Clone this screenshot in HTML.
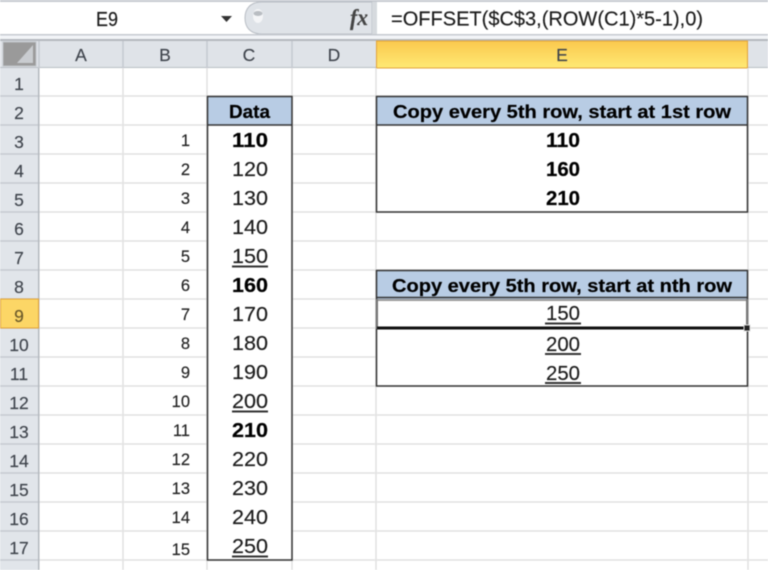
<!DOCTYPE html>
<html><head><meta charset="utf-8"><style>
html,body{margin:0;padding:0;background:#fff;width:768px;height:570px;overflow:hidden}
svg{display:block;filter:blur(0.5px)}
text{font-family:"Liberation Sans",sans-serif;fill:#1c1c1c;stroke:#1c1c1c;stroke-width:.15px}
.b{font-weight:bold;fill:#000;stroke:#000;stroke-width:.2px}
.h{fill:#3f444c;stroke:#3f444c;font-size:17.5px;text-anchor:middle}
.n{font-size:16.5px;text-anchor:end;fill:#222;stroke:#222}
.v{font-size:20.5px}
.g{stroke:#e2e2e2;stroke-width:1.5;fill:none}
.s{stroke:#c5cad0;stroke-width:1.5}
.k{fill:none;stroke:#333;stroke-width:1.5}
</style></head><body>
<svg width="768" height="570" viewBox="0 0 768 570" xmlns="http://www.w3.org/2000/svg">
<rect width="768" height="570" fill="#fff"/>
<!-- top bar -->
<rect width="768" height="41" fill="#fff"/>
<rect width="768" height="2" fill="#c6cad0"/>
<path d="M372 2V34H262C250 34 245 27 245 18C245 9 250 2 262 2Z" fill="#dfe3e8" stroke="#b8bdc4" stroke-width="1"/>
<ellipse cx="258" cy="16" rx="5" ry="7" fill="#f4f5f7"/>
<ellipse cx="258" cy="13.500" rx="4.500" ry="2.500" fill="#b9bdc2"/>
<rect x="372" y="2" width="5" height="32" fill="#d6dade"/>
<rect x="0" y="34" width="768" height="1.5" fill="#c6cad0"/>
<rect x="0" y="35.5" width="768" height="3.5" fill="#f2f4f7"/>
<rect x="0" y="39" width="768" height="2" fill="#b4b8be"/>
<text x="96" y="26" font-size="20" textLength="22" lengthAdjust="spacingAndGlyphs">E9</text>
<path d="M221 16H232L226.500 22Z" fill="#333"/>
<text x="350" y="25" style="font-family:'Liberation Serif',serif;font-style:italic;font-weight:bold;fill:#444;stroke:#444" font-size="23" textLength="18" lengthAdjust="spacingAndGlyphs">fx</text>
<text x="391" y="25.500" font-size="20" textLength="312" lengthAdjust="spacingAndGlyphs">=OFFSET($C$3,(ROW(C1)*5-1),0)</text>

<!-- column headers -->
<rect x="0" y="41" width="768" height="27" fill="#dfe3e8"/>
<rect x="0" y="67" width="768" height="1" fill="#b9bec4"/>
<path class="s" d="M123 41V68M207 41V68M292 41V68M39 41V68"/>
<rect x="3" y="42" width="33" height="24" fill="#9a9a9a" stroke="#bfc3c8"/>
<path d="M17 63L33 45V63Z" fill="#c9ccd0"/>
<defs><linearGradient id="y" x1="0" y1="0" x2="0" y2="1"><stop offset="0" stop-color="#fbc94e"/><stop offset="1" stop-color="#ffe974"/></linearGradient></defs>
<rect x="376.500" y="41" width="371" height="27" fill="url(#y)" stroke="#e2a33a" stroke-width="1"/>
<text class="h" x="81" y="61">A</text>
<text class="h" x="165" y="61">B</text>
<text class="h" x="249" y="61">C</text>
<text class="h" x="334" y="61">D</text>
<text class="h" x="562" y="61">E</text>

<!-- grid -->
<path class="g" d="M123 68V570M207 68V570M292 68V570M376 68V570M748 68V570
M39 96H768M39 125H768M39 154H768M39 183H768M39 212H768M39 241H768M39 270H768M39 299H768M39 328H768M39 357H768M39 386H768M39 415H768M39 444H768M39 473H768M39 502H768M39 531H768M39 560H768"/>

<!-- row headers -->
<rect x="0" y="68" width="39" height="502" fill="#e1e5ea"/>
<rect x="38" y="68" width="1.500" height="502" fill="#b4b9bf"/>
<path class="s" d="M0 96H38M0 125H38M0 154H38M0 183H38M0 212H38M0 241H38M0 270H38M0 299H38M0 328H38M0 357H38M0 386H38M0 415H38M0 444H38M0 473H38M0 502H38M0 531H38M0 560H38"/>
<rect x="0.500" y="299" width="38" height="29" fill="#fcd666" stroke="#e2a33a" stroke-width="1"/>
<text class="h" x="19" y="90">1</text>
<text class="h" x="19" y="119">2</text>
<text class="h" x="19" y="148">3</text>
<text class="h" x="19" y="177">4</text>
<text class="h" x="19" y="206">5</text>
<text class="h" x="19" y="235">6</text>
<text class="h" x="19" y="264">7</text>
<text class="h" x="19" y="293">8</text>
<text class="h" x="19" y="322" style="fill:#6b5a2a;stroke:#6b5a2a">9</text>
<text class="h" x="19" y="351">10</text>
<text class="h" x="19" y="380">11</text>
<text class="h" x="19" y="409">12</text>
<text class="h" x="19" y="438">13</text>
<text class="h" x="19" y="467">14</text>
<text class="h" x="19" y="496">15</text>
<text class="h" x="19" y="525">16</text>
<text class="h" x="19" y="554">17</text>

<!-- header fills -->
<rect x="207" y="96" width="85" height="29" fill="#b8cce4"/>
<rect x="376" y="96" width="372" height="29" fill="#b8cce4"/>
<rect x="376" y="270" width="372" height="29" fill="#b8cce4"/>
<rect x="208" y="125" width="83.500" height="435" fill="#fff"/>
<rect x="377" y="125" width="370" height="87" fill="#fff"/>
<rect x="377" y="299" width="370" height="87" fill="#fff"/>

<!-- boxes -->
<rect class="k" x="207.500" y="96.500" width="84.500" height="463.500"/>
<path class="k" d="M207.500 125H292"/>
<rect class="k" x="376.500" y="96.500" width="371" height="115.500"/>
<path class="k" d="M376.500 125H747.500"/>
<rect class="k" x="376.500" y="270.500" width="371" height="115.500"/>
<path class="k" d="M376.500 297.500H747.500"/>
<!-- selection -->
<rect x="376" y="299" width="372" height="2" fill="#9a9a9a"/>
<rect x="376" y="299" width="2" height="30" fill="#777"/>
<rect x="746" y="299" width="2" height="30" fill="#777"/>
<rect x="377" y="326.500" width="370" height="3" fill="#111"/>
<rect x="744" y="325" width="6" height="6" fill="#222" stroke="#ddd" stroke-width="1"/>

<!-- headers text -->
<text class="b" x="229" y="118" font-size="18.5" textLength="41" lengthAdjust="spacingAndGlyphs">Data</text>
<text class="b" x="393" y="118" font-size="18.500" textLength="338" lengthAdjust="spacingAndGlyphs">Copy every 5th row, start at 1st row</text>
<text class="b" x="392" y="292" font-size="18.500" textLength="340" lengthAdjust="spacingAndGlyphs">Copy every 5th row, start at nth row</text>

<!-- column B -->
<text class="n" x="190" y="146">1</text>
<text class="n" x="190" y="175">2</text>
<text class="n" x="190" y="204">3</text>
<text class="n" x="190" y="233">4</text>
<text class="n" x="190" y="262">5</text>
<text class="n" x="190" y="291">6</text>
<text class="n" x="190" y="320">7</text>
<text class="n" x="190" y="349">8</text>
<text class="n" x="190" y="378">9</text>
<text class="n" x="190" y="407">10</text>
<text class="n" x="190" y="436">11</text>
<text class="n" x="190" y="465">12</text>
<text class="n" x="190" y="494">13</text>
<text class="n" x="190" y="523">14</text>
<text class="n" x="190" y="555">15</text>

<!-- column C -->
<text class="v b" x="232" y="147" textLength="36" lengthAdjust="spacingAndGlyphs">110</text>
<text class="v" x="232" y="176" textLength="36" lengthAdjust="spacingAndGlyphs">120</text>
<text class="v" x="232" y="205" textLength="36" lengthAdjust="spacingAndGlyphs">130</text>
<text class="v" x="232" y="234" textLength="36" lengthAdjust="spacingAndGlyphs">140</text>
<text class="v" x="232" y="263" textLength="36" lengthAdjust="spacingAndGlyphs">150</text>
<text class="v b" x="232" y="292" textLength="36" lengthAdjust="spacingAndGlyphs">160</text>
<text class="v" x="232" y="321" textLength="36" lengthAdjust="spacingAndGlyphs">170</text>
<text class="v" x="232" y="350" textLength="36" lengthAdjust="spacingAndGlyphs">180</text>
<text class="v" x="232" y="379" textLength="36" lengthAdjust="spacingAndGlyphs">190</text>
<text class="v" x="232" y="408" textLength="36" lengthAdjust="spacingAndGlyphs">200</text>
<text class="v b" x="232" y="437" textLength="36" lengthAdjust="spacingAndGlyphs">210</text>
<text class="v" x="232" y="466" textLength="36" lengthAdjust="spacingAndGlyphs">220</text>
<text class="v" x="232" y="495" textLength="36" lengthAdjust="spacingAndGlyphs">230</text>
<text class="v" x="232" y="524" textLength="36" lengthAdjust="spacingAndGlyphs">240</text>
<text class="v" x="232" y="553" textLength="36" lengthAdjust="spacingAndGlyphs">250</text>
<rect x="232" y="265.500" width="36" height="2" fill="#333"/>
<rect x="232" y="410.500" width="36" height="2" fill="#333"/>
<rect x="232" y="555.500" width="36" height="2" fill="#333"/>

<!-- column E -->
<text class="v b" x="546" y="147" textLength="34" lengthAdjust="spacingAndGlyphs">110</text>
<text class="v b" x="546" y="176" textLength="34" lengthAdjust="spacingAndGlyphs">160</text>
<text class="v b" x="546" y="205" textLength="34" lengthAdjust="spacingAndGlyphs">210</text>
<text class="v" x="546" y="320" textLength="34" lengthAdjust="spacingAndGlyphs">150</text>
<text class="v" x="546" y="351" textLength="34" lengthAdjust="spacingAndGlyphs">200</text>
<text class="v" x="546" y="380" textLength="34" lengthAdjust="spacingAndGlyphs">250</text>
<rect x="545" y="322.500" width="36" height="2" fill="#333"/>
<rect x="545" y="353" width="36" height="2" fill="#333"/>
<rect x="545" y="382" width="36" height="2" fill="#333"/>
</svg>
</body></html>
